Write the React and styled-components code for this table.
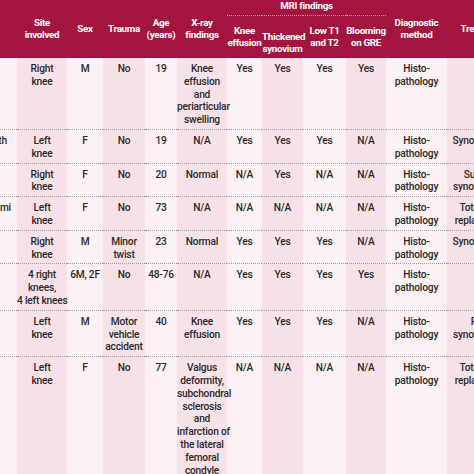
import styled, { createGlobalStyle } from "styled-components";

const GlobalStyle = createGlobalStyle`
  html, body {
    margin: 0;
    padding: 0;
    background: #fcf2f5;
  }
  body {
    font-family: Roboto, "Open Sans", sans-serif;
  }
`;

const Frame = styled.div`
  width: 474px;
  height: 474px;
  overflow: hidden;
  background: #fcf2f5;
`;

const Table = styled.table`
  margin-left: -53px;
  width: 570px;
  border-collapse: collapse;
  border-spacing: 0;
  table-layout: fixed;
  font-size: 10.2px;
  font-weight: 500;
  letter-spacing: -0.2px;
  color: #2a2a2a;
`;

const Col = styled.col`
  width: ${(p) => p.$w}px;
  background: ${(p) => (p.$tint ? "#f8e2e9" : "#fcf2f5")};
`;

const HeadRow = styled.tr`
  height: ${(p) => p.$h}px;
`;

const HeadCell = styled.th`
  padding: ${(p) => (p.$drop ? "12px 0 0" : "0")};
  background: #a3143f;
  color: #fff;
  font-weight: 700;
  font-size: 9.8px;
  letter-spacing: -0.3px;
  line-height: 12px;
  text-align: center;
  vertical-align: middle;
  white-space: pre;
`;

const GroupCell = styled(HeadCell)`
  vertical-align: top;
  padding-top: 0;
  border-bottom: 1px dotted rgba(255, 255, 255, 0.55);
`;

const Row = styled.tr`
  & + & > td {
    border-top: 1px dotted #a0a0a0;
  }
`;

const Cell = styled.td`
  padding: 5px 0 2px;
  line-height: 12.8px;
  text-align: center;
  vertical-align: top;
  white-space: pre;
`;

const AuthorCell = styled(Cell)`
  text-align: right;
  padding-right: ${(p) => p.$end || 0}px;
`;

const columns = [70, 50, 36, 42, 32, 50, 35, 41, 43, 40, 61, 70];

const diag = "Histo-\npathology";

const rows = [
  ["", 0, "Right\nknee", "M", "No", "19", "Knee\neffusion\nand\nperiarticular\nswelling", "Yes", "Yes", "Yes", "Yes", diag, ""],
  ["Smith", 10, "Left\nknee", "F", "No", "19", "N/A", "Yes", "Yes", "Yes", "N/A", diag, "Synovectomy"],
  ["", 0, "Right\nknee", "F", "No", "20", "Normal", "N/A", "Yes", "N/A", "N/A", diag, "Subtotal\nsynovectomy"],
  ["Hiromi", 6, "Left\nknee", "F", "No", "73", "N/A", "N/A", "N/A", "N/A", "N/A", diag, "Total knee\nreplacement"],
  ["", 0, "Right\nknee", "M", "Minor\ntwist", "23", "Normal", "Yes", "Yes", "Yes", "N/A", diag, "Synovectomy"],
  ["", 0, "4 right\nknees,\n4 left knees", "6M, 2F", "No", "48-76", "N/A", "Yes", "Yes", "Yes", "Yes", diag, ""],
  ["", 0, "Left\nknee", "M", "Motor\nvehicle\naccident", "40", "Knee\neffusion", "Yes", "Yes", "Yes", "N/A", diag, "Redo\nsynovectomy"],
  [
    "",
    0,
    "Left\nknee",
    "F",
    "No",
    "77",
    "Valgus\ndeformity,\nsubchondral\nsclerosis\nand\ninfarction of\nthe lateral\nfemoral\ncondyle",
    "N/A",
    "N/A",
    "N/A",
    "N/A",
    diag,
    "Total knee\nreplacement",
  ],
];

function App() {
  return (
    <Frame>
      <GlobalStyle />
      <Table>
        <colgroup>
          {columns.map((w, i) => (
            <Col key={i} $w={w} $tint={i % 2 === 1} />
          ))}
        </colgroup>
        <thead>
          <HeadRow $h={15}>
            <HeadCell rowSpan={2} />
            <HeadCell rowSpan={2}>{"Site\ninvolved"}</HeadCell>
            <HeadCell rowSpan={2}>Sex</HeadCell>
            <HeadCell rowSpan={2}>Trauma</HeadCell>
            <HeadCell rowSpan={2}>{"Age\n(years)"}</HeadCell>
            <HeadCell rowSpan={2}>{"X-ray\nfindings"}</HeadCell>
            <GroupCell colSpan={4}>MRI findings</GroupCell>
            <HeadCell rowSpan={2}>{"Diagnostic\nmethod"}</HeadCell>
            <HeadCell rowSpan={2}>Treatment</HeadCell>
          </HeadRow>
          <HeadRow $h={43}>
            <HeadCell>{"Knee\neffusion"}</HeadCell>
            <HeadCell $drop>{"Thickened\nsynovium"}</HeadCell>
            <HeadCell>{"Low T1\nand T2"}</HeadCell>
            <HeadCell>{"Blooming\non GRE"}</HeadCell>
          </HeadRow>
        </thead>
        <tbody>
          {rows.map(([author, end, ...cells], r) => (
            <Row key={r}>
              <AuthorCell $end={end}>{author}</AuthorCell>
              {cells.map((text, c) => (
                <Cell key={c}>{text}</Cell>
              ))}
            </Row>
          ))}
        </tbody>
      </Table>
    </Frame>
  );
}

export default App;
